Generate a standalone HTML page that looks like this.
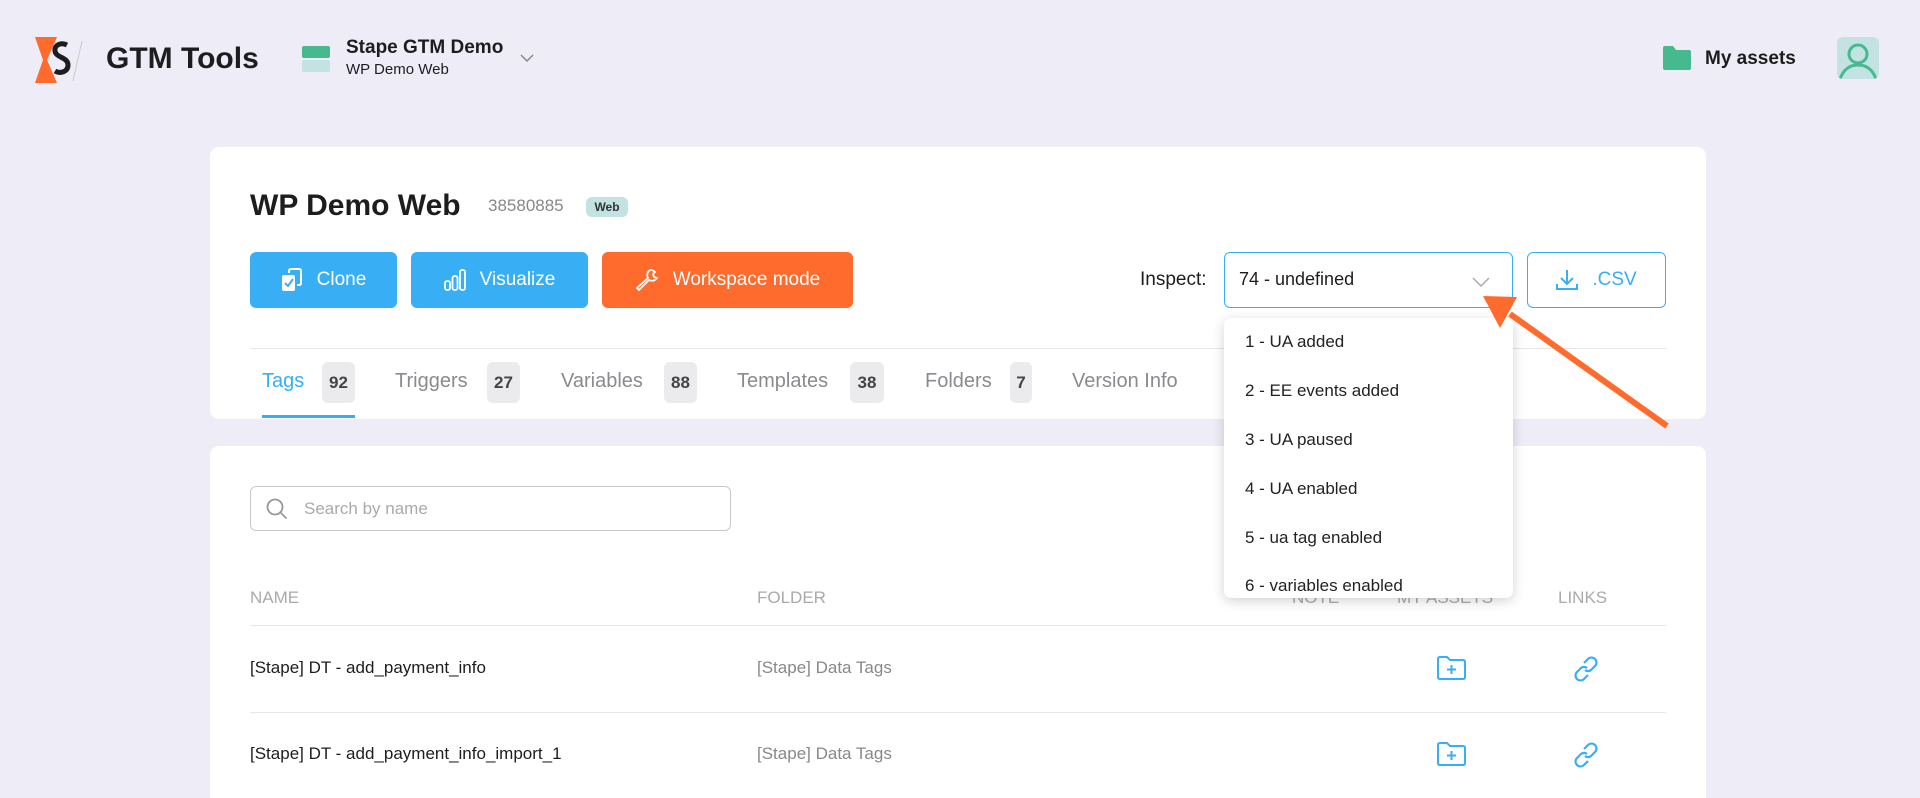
<!DOCTYPE html>
<html style="width:1920px;height:798px;overflow:hidden"><head><meta charset="utf-8"><style>
*{box-sizing:border-box;margin:0;padding:0}
body{width:1920px;height:798px;overflow:hidden;background:#eeecf6;font-family:"Liberation Sans",Arial,sans-serif;position:relative;color:#1d1d1f}
.abs{position:absolute}
.card{position:absolute;background:#fff;border-radius:9px}
.btn{position:absolute;top:252px;height:56px;border-radius:6px;color:#fff;font-size:19px;display:flex;align-items:center;justify-content:center;gap:14px}
.tab{position:absolute;top:370px;font-size:20px;color:#8a8a8f}
.bdg{position:absolute;top:362px;height:41px;border-radius:6px;background:#ebebee;color:#444;font-size:17px;font-weight:bold;display:flex;align-items:center;justify-content:center}
.th{position:absolute;top:588px;font-size:17px;color:#aaa}
.item{position:absolute;left:21px;font-size:17px;color:#222}
</style></head><body>
<svg class="abs" style="left:35px;top:37px" width="50" height="46" viewBox="0 0 50 46">
<path d="M0 0H22L12 23L22 46H0L8 23Z" fill="#ff6b2c"/>
<path d="M32 8c-6-3-13 0-12 6c1 7 13 6 13 14c0 7-8 9-13 6" stroke="#1d1d1f" stroke-width="5" fill="none"/>
<line x1="47" y1="4" x2="38" y2="44" stroke="#ccc" stroke-width="1"/>
</svg>
<div class="abs" style="left:106px;top:42px;font-size:30px;font-weight:bold">GTM Tools</div>
<div class="abs" style="left:302px;top:46px;width:28px;height:12px;background:#47b98f;border-radius:2px"></div>
<div class="abs" style="left:302px;top:60px;width:28px;height:12px;background:#c3e2e2;border-radius:2px"></div>
<div class="abs" style="left:346px;top:37px;font-size:19px;font-weight:bold">Stape GTM Demo</div>
<div class="abs" style="left:346px;top:61px;font-size:15px">WP Demo Web</div>
<svg class="abs" style="left:520px;top:53px" width="14" height="10"><path d="M1 2l6 6l6-6" stroke="#888" stroke-width="1.5" fill="none"/></svg>
<svg class="abs" style="left:1663px;top:46px" width="28" height="24"><path d="M0 2Q0 0 2 0H10L13 4H26Q28 4 28 6V22Q28 24 26 24H2Q0 24 0 22Z" fill="#47b98f"/></svg>
<div class="abs" style="left:1705px;top:48px;font-size:19px;font-weight:bold">My assets</div>
<div class="abs" style="left:1837px;top:37px;width:42px;height:42px;background:#c3e2e2;border-radius:6px;overflow:hidden">
<svg width="42" height="42"><circle cx="21" cy="17" r="9" stroke="#47b98f" stroke-width="3" fill="none"/><path d="M3 42Q8 28 21 28Q34 28 39 42" stroke="#47b98f" stroke-width="3" fill="none"/></svg></div>

<div class="card" style="left:210px;top:147px;width:1496px;height:272px"></div>
<div class="abs" style="left:250px;top:189px;font-size:30px;font-weight:bold">WP Demo Web</div>
<div class="abs" style="left:488px;top:196px;font-size:17px;color:#888">38580885</div>
<div class="abs" style="left:586px;top:197px;width:42px;height:20px;border-radius:6px;background:#c3e2e2;font-size:12px;font-weight:bold;display:flex;align-items:center;justify-content:center;color:#333">Web</div>
<div class="btn" style="left:250px;width:147px;background:#38aff5"><svg width="22" height="24"><rect x="1" y="7" width="13" height="16" rx="2" fill="#fff"/><path d="M8 5V3q0-2 2-2h8q2 0 2 2v12q0 2-2 2h-2" stroke="#fff" stroke-width="2" fill="none"/><path d="M4 15l3 3l5-7" stroke="#38aff5" stroke-width="2" fill="none"/></svg>Clone</div>
<div class="btn" style="left:411px;width:177px;background:#38aff5"><svg width="22" height="22" fill="none" stroke="#fff" stroke-width="1.8"><rect x="1" y="12" width="5" height="9" rx="2"/><rect x="8.5" y="7" width="5" height="14" rx="2"/><rect x="16" y="1" width="5" height="20" rx="2"/></svg>Visualize</div>
<div class="btn" style="left:602px;width:251px;background:#ff6b2c"><svg width="24" height="24" fill="none" stroke="#fff" stroke-width="1.8"><path d="M15 2a6 6 0 0 0-2 8L2 20l2 2L14 12a6 6 0 0 0 8-2l-3-1l-1-3l2-2a6 6 0 0 0-4-2z"/></svg>Workspace mode</div>
<div class="abs" style="left:1140px;top:269px;font-size:19px">Inspect:</div>
<div class="abs" style="left:1224px;top:252px;width:289px;height:56px;border:1.5px solid #38aff5;border-radius:6px"></div>
<div class="abs" style="left:1239px;top:269px;font-size:18px">74 - undefined</div>
<svg class="abs" style="left:1472px;top:277px" width="18" height="11"><path d="M1 1l8 8l8-8" stroke="#aaa" stroke-width="1.5" fill="none"/></svg>
<div class="abs" style="left:1527px;top:252px;width:139px;height:56px;border:1.5px solid #38aff5;border-radius:6px;color:#38aff5;font-size:19px;display:flex;align-items:center;justify-content:center;gap:14px"><svg width="22" height="22" fill="none" stroke="#38aff5" stroke-width="2"><path d="M11 1v13M5 9l6 6l6-6M1 15v5h20v-5"/></svg>.CSV</div>
<div class="abs" style="left:250px;top:348px;width:1416px;height:1px;background:#e6e6ea"></div>
<div class="tab" style="left:262px;color:#38aff5">Tags</div><div class="bdg" style="left:322px;width:33px">92</div>
<div class="abs" style="left:262px;top:415px;width:93px;height:3px;background:#38aff5"></div>
<div class="tab" style="left:395px">Triggers</div><div class="bdg" style="left:487px;width:33px">27</div>
<div class="tab" style="left:561px">Variables</div><div class="bdg" style="left:664px;width:33px">88</div>
<div class="tab" style="left:737px">Templates</div><div class="bdg" style="left:850px;width:34px">38</div>
<div class="tab" style="left:925px">Folders</div><div class="bdg" style="left:1010px;width:22px">7</div>
<div class="tab" style="left:1072px">Version Info</div>

<div class="card" style="left:210px;top:446px;width:1496px;height:352px;border-radius:9px 9px 0 0"></div>
<div class="abs" style="left:250px;top:486px;width:481px;height:45px;border:1.5px solid #c8c8cc;border-radius:6px"></div>
<svg class="abs" style="left:266px;top:498px" width="22" height="22" fill="none" stroke="#999" stroke-width="1.8"><circle cx="9" cy="9" r="7.5"/><path d="M14.5 14.5l6 6"/></svg>
<div class="abs" style="left:304px;top:499px;font-size:17px;color:#aaa">Search by name</div>
<div class="th" style="left:250px">NAME</div>
<div class="th" style="left:757px">FOLDER</div>
<div class="th" style="left:1292px">NOTE</div>
<div class="th" style="left:1397px">MY ASSETS</div>
<div class="th" style="left:1558px">LINKS</div>
<div class="abs" style="left:250px;top:625px;width:1416px;height:1px;background:#e6e6ea"></div>
<div class="abs" style="left:250px;top:712px;width:1416px;height:1px;background:#e6e6ea"></div>
<div class="abs" style="left:250px;top:658px;font-size:17px">[Stape] DT - add_payment_info</div>
<div class="abs" style="left:757px;top:658px;font-size:17px;color:#888">[Stape] Data Tags</div>
<div class="abs" style="left:250px;top:744px;font-size:17px">[Stape] DT - add_payment_info_import_1</div>
<div class="abs" style="left:757px;top:744px;font-size:17px;color:#888">[Stape] Data Tags</div>
<svg class="abs" style="left:1437px;top:656px" width="29" height="25" fill="none" stroke="#38aff5" stroke-width="2"><path d="M1 3q0-2 2-2h7l3 3h13q2 0 2 2v15q0 2-2 2H3q-2 0-2-2z M14.5 9v9M10 13.5h9"/></svg>
<svg class="abs" style="left:1437px;top:742px" width="29" height="25" fill="none" stroke="#38aff5" stroke-width="2"><path d="M1 3q0-2 2-2h7l3 3h13q2 0 2 2v15q0 2-2 2H3q-2 0-2-2z M14.5 9v9M10 13.5h9"/></svg>
<svg class="abs" style="left:1571px;top:654px" width="30" height="30" fill="none" stroke="#38aff5" stroke-width="2.2"><path d="M13 9l4-4a4.5 4.5 0 0 1 7 7l-4 4a4.5 4.5 0 0 1-6 0M17 21l-4 4a4.5 4.5 0 0 1-7-7l4-4a4.5 4.5 0 0 1 6 0"/></svg>
<svg class="abs" style="left:1571px;top:740px" width="30" height="30" fill="none" stroke="#38aff5" stroke-width="2.2"><path d="M13 9l4-4a4.5 4.5 0 0 1 7 7l-4 4a4.5 4.5 0 0 1-6 0M17 21l-4 4a4.5 4.5 0 0 1-7-7l4-4a4.5 4.5 0 0 1 6 0"/></svg>

<div class="abs" style="left:1224px;top:318px;width:289px;height:280px;background:#fff;border-radius:7px;box-shadow:0 3px 12px rgba(0,0,0,.18);overflow:hidden">
<div class="item" style="top:14px">1 - UA added</div>
<div class="item" style="top:63px">2 - EE events added</div>
<div class="item" style="top:112px">3 - UA paused</div>
<div class="item" style="top:161px">4 - UA enabled</div>
<div class="item" style="top:210px">5 - ua tag enabled</div>
<div class="item" style="top:258px">6 - variables enabled</div>
</div>
<svg class="abs" style="left:0;top:0" width="1920" height="798"><line x1="1667" y1="426" x2="1510" y2="314" stroke="#ff6b2c" stroke-width="6"/><path d="M1483 296L1517 297L1500 328Z" fill="#ff6b2c"/></svg>
</body></html>
